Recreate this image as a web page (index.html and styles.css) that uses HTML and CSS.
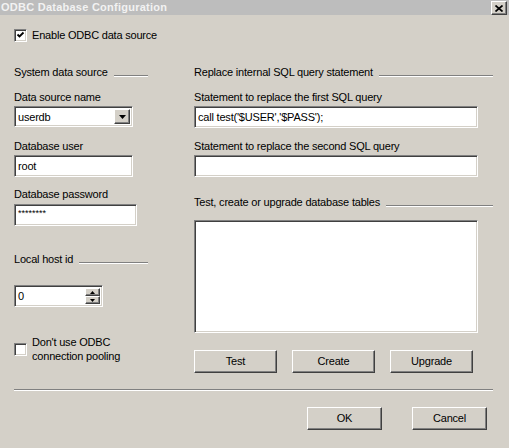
FILE: index.html
```html
<!DOCTYPE html>
<html>
<head>
<meta charset="utf-8">
<title>ODBC Database Configuration</title>
<link rel="stylesheet" href="styles.css">
</head>
<body>
<div class="window">
  <div class="titlebar">
    <span class="title">ODBC Database Configuration</span>
    <span class="close">
      <svg width="8" height="7" viewBox="0 0 8 7"><path d="M0.5,0.5 L7.5,6.5 M7.5,0.5 L0.5,6.5" stroke="#000" stroke-width="1.7" fill="none"/></svg>
    </span>
  </div>
  <div class="content">
    <div class="check-row enable">
      <span class="checkbox"><svg width="9" height="9" viewBox="0 0 9 9"><path d="M1.5,3.5 L3.5,5.5 L7.5,1.5" stroke="#000" stroke-width="1.8" fill="none"/></svg></span>
      <span class="check-label">Enable ODBC data source</span>
    </div>

    <div class="columns">
      <div class="col col-left">
        <div class="hdr"><span>System data source</span><span class="etch"></span></div>
        <div class="lbl lbl-first">Data source name</div>
        <div class="sunken combo">
          <span class="combo-text">userdb</span>
          <span class="raised combo-btn"><svg width="7" height="4" viewBox="0 0 7 4"><polygon points="0,0 7,0 3.5,4" fill="#000"/></svg></span>
        </div>
        <div class="lbl lbl-next">Database user</div>
        <div class="sunken edit edit-user">root</div>
        <div class="lbl lbl-pw">Database password</div>
        <div class="sunken edit edit-pw">********</div>
        <div class="hdr hdr-host"><span>Local host id</span><span class="etch"></span></div>
        <div class="sunken spin">
          <span class="spin-text">0</span>
          <span class="spin-btns">
            <span class="raised spin-btn"><svg width="5" height="3" viewBox="0 0 5 3"><polygon points="2.5,0 5,3 0,3" fill="#000"/></svg></span>
            <span class="raised spin-btn"><svg width="5" height="3" viewBox="0 0 5 3"><polygon points="0,0 5,0 2.5,3" fill="#000"/></svg></span>
          </span>
        </div>
        <div class="check-row pool">
          <span class="checkbox"></span>
          <span class="check-label">Don't use ODBC<br>connection pooling</span>
        </div>
      </div>

      <div class="col col-right">
        <div class="hdr"><span>Replace internal SQL query statement</span><span class="etch"></span></div>
        <div class="lbl lbl-first">Statement to replace the first SQL query</div>
        <div class="sunken edit edit-wide">call test('$USER','$PASS');</div>
        <div class="lbl lbl-second">Statement to replace the second SQL query</div>
        <div class="sunken edit edit-wide"></div>
        <div class="hdr hdr-tables"><span>Test, create or upgrade database tables</span><span class="etch"></span></div>
        <div class="sunken listbox"></div>
        <div class="btn-row">
          <div class="raised btn">Test</div>
          <div class="raised btn">Create</div>
          <div class="raised btn">Upgrade</div>
        </div>
      </div>
    </div>

    <div class="separator"></div>
    <div class="footer">
      <div class="raised btn btn-dlg">OK</div>
      <div class="raised btn btn-dlg">Cancel</div>
    </div>
  </div>
</div>
</body>
</html>
```

FILE: styles.css
```css
html, body {
  margin: 0;
  padding: 0;
}
body {
  background: #d4d0c8;
  font-family: "Liberation Sans", Arial, sans-serif;
  font-size: 11px;
  letter-spacing: -0.2px;
  color: #000;
}
.window {
  width: 509px;
  height: 448px;
  overflow: hidden;
  background: #d4d0c8;
}
.titlebar {
  height: 15px;
  background: #bdbdbd;
  display: flex;
  justify-content: space-between;
  align-items: flex-start;
}
.title {
  font-weight: bold;
  color: #f2f2f2;
  line-height: 15px;
  padding-left: 1px;
  letter-spacing: 0.25px;
}
.close {
  width: 14px;
  height: 12px;
  margin: 1px 2px 0 0;
  background: #d4d0c8;
  border: 1px solid;
  border-color: #ffffff #404040 #404040 #ffffff;
  box-shadow: inset -1px -1px 0 #808080;
  display: flex;
  align-items: center;
  justify-content: center;
}
.content {
  padding: 0 16px 0 14px;
}
.check-row {
  display: flex;
  align-items: center;
}
.enable {
  margin-top: 14px;
  height: 13px;
  line-height: 13px;
}
.checkbox {
  box-sizing: border-box;
  width: 13px;
  height: 13px;
  flex: none;
  background: #fff;
  border: 1px solid;
  border-color: #808080 #ffffff #ffffff #808080;
  box-shadow: inset 1px 1px 0 #404040, inset -1px -1px 0 #d4d0c8;
  display: flex;
  align-items: center;
  justify-content: center;
}
.check-label {
  margin-left: 5px;
}
.columns {
  margin-top: 24px;
  display: flex;
  gap: 46px;
  height: 307px;
}
.col {
  display: flex;
  flex-direction: column;
  align-items: flex-start;
}
.col-left {
  width: 134px;
}
.col-right {
  width: 299px;
}
.hdr {
  display: flex;
  align-self: stretch;
  height: 13px;
  line-height: 13px;
  white-space: nowrap;
}
.etch {
  flex: 1;
  height: 0;
  margin: 9px 0 0 6px;
  border-top: 1px solid #808080;
  border-bottom: 1px solid #ffffff;
}
.lbl {
  height: 13px;
  line-height: 13px;
  white-space: nowrap;
}
.lbl-first { margin-top: 12px; }
.lbl-next { margin-top: 13px; }
.lbl-second { margin-top: 12px; }
.lbl-pw { margin-top: 11px; }
.hdr-host { margin-top: 27px; }
.hdr-tables { margin-top: 19px; }

.sunken {
  box-sizing: border-box;
  background: #fff;
  border: 1px solid;
  border-color: #808080 #ffffff #ffffff #808080;
  box-shadow: inset 1px 1px 0 #404040, inset -1px -1px 0 #d4d0c8;
  padding: 2px;
}
.raised {
  box-sizing: border-box;
  background: #d4d0c8;
  border: 1px solid;
  border-color: #ffffff #404040 #404040 #ffffff;
  box-shadow: inset -1px -1px 0 #808080;
}
.combo {
  margin-top: 2px;
  width: 119px;
  height: 21px;
  display: flex;
  align-items: stretch;
}
.combo-text {
  flex: 1;
  line-height: 17px;
  padding-left: 1px;
}
.combo-btn {
  width: 16px;
  display: flex;
  align-items: center;
  justify-content: center;
}
.edit {
  margin-top: 2px;
  height: 22px;
  line-height: 17px;
  padding-left: 3px;
  white-space: nowrap;
  overflow: hidden;
}
.edit-user { width: 119px; }
.edit-pw {
  width: 123px;
  margin-top: 3px;
  font-size: 9px;
  line-height: 12px;
  letter-spacing: 0;
}
.edit-wide { width: 284px; }
.spin {
  margin-top: 19px;
  width: 89px;
  height: 22px;
  display: flex;
  align-items: stretch;
}
.spin-text {
  flex: 1;
  line-height: 17px;
  padding-left: 1px;
}
.spin-btns {
  width: 15px;
  display: flex;
  flex-direction: column;
}
.spin-btn {
  flex: 1;
  display: flex;
  align-items: center;
  justify-content: center;
}
.pool {
  margin-top: 28px;
  line-height: 14px;
}
.listbox {
  margin-top: 11px;
  width: 284px;
  height: 113px;
}
.btn-row {
  margin-top: 17px;
  display: flex;
  gap: 15px;
}
.btn {
  width: 83px;
  height: 23px;
  line-height: 21px;
  text-align: center;
}
.separator {
  margin-top: 16px;
  height: 0;
  border-top: 1px solid #808080;
  border-bottom: 1px solid #ffffff;
}
.footer {
  margin-top: 16px;
  display: flex;
  justify-content: flex-end;
  gap: 30px;
  padding-right: 6px;
}
.btn-dlg {
  width: 75px;
}
```
